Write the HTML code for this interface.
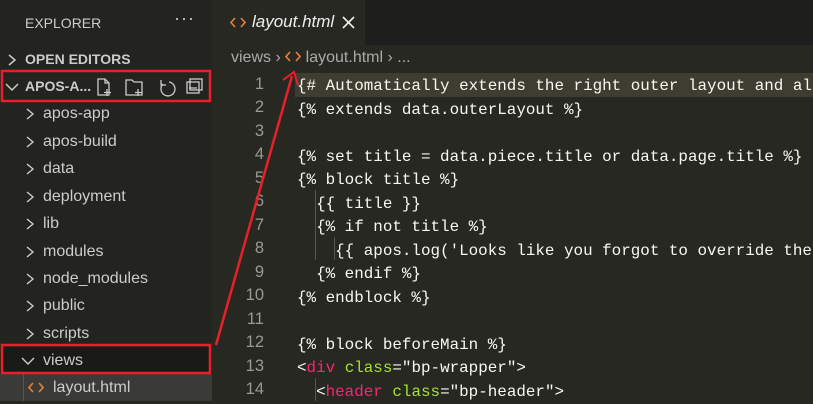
<!DOCTYPE html><html><head><style>
body{margin:0;width:813px;height:401px;overflow:hidden;background:#272822;font-family:"Liberation Sans",sans-serif;position:relative}
.sb{position:absolute;left:0;top:0;width:212px;height:401px;background:#232320;color:#ccc}
.row{position:absolute;left:0;width:212px;height:27px;line-height:27px;font-size:16px;color:#ccc}
.cv{position:absolute;top:8px}
.tb{position:absolute;left:212px;top:0;width:601px;height:45px;background:#1e1e1c}
.tab{position:absolute;left:212px;top:0;width:153px;height:45px;background:#272822}
.code{position:absolute;font-family:"Liberation Mono",monospace;font-size:15.9px;color:#f8f8f2;white-space:pre}
.ln{position:absolute;font-family:"Liberation Sans",sans-serif;font-size:16.5px;color:#9a9a94;text-align:right;width:50px;left:214px}
.o{color:#e8803a}
.p{color:#f92672}.g{color:#a6e22e}
</style></head><body>
<div class="sb">
<div style="position:absolute;left:25px;top:15px;font-size:14px;color:#ccc">EXPLORER</div>
<div style="position:absolute;left:174px;top:8px;font-size:18px;color:#ccc;letter-spacing:1px">···</div>
<div class="row" style="top:46px;font-weight:bold;font-size:14px"><svg class="cv" style="left:7px" width="10" height="12" fill="none" stroke="#ccc" stroke-width="1.5"><path d="M2 1l6 5-6 5"/></svg><span style="position:absolute;left:25px">OPEN EDITORS</span></div>
<div class="row" style="top:73px;font-weight:bold;font-size:14px"><svg class="cv" style="left:5px;top:10px" width="14" height="9" fill="none" stroke="#ccc" stroke-width="1.5"><path d="M1 1l6 6 6-6"/></svg><span style="position:absolute;left:25px">APOS-A...</span>
<svg style="position:absolute;left:95px;top:4px" width="110" height="20" fill="none" stroke="#ccc" stroke-width="1.3"><path d="M3 2h7l4 4v12H3z M10 2v4h4 M12 12v7 M9 15.5h7"/><path d="M31 3h6l2 2h8v13H31z M43 12v7 M40 15.5h7"/><path d="M74 5a7 7 0 1 1-6 2 M66 3v5h5"/><rect x="92" y="5" width="12" height="11"/><rect x="95" y="2" width="12" height="11"/><path d="M94 11h8"/></svg></div>
<div class="row" style="top:100px"><svg class="cv" style="left:25px" width="10" height="12" fill="none" stroke="#ccc" stroke-width="1.4"><path d="M2 1l6 5-6 5"/></svg><span style="position:absolute;left:43px">apos-app</span></div>
<div class="row" style="top:128px"><svg class="cv" style="left:25px" width="10" height="12" fill="none" stroke="#ccc" stroke-width="1.4"><path d="M2 1l6 5-6 5"/></svg><span style="position:absolute;left:43px">apos-build</span></div>
<div class="row" style="top:155px"><svg class="cv" style="left:25px" width="10" height="12" fill="none" stroke="#ccc" stroke-width="1.4"><path d="M2 1l6 5-6 5"/></svg><span style="position:absolute;left:43px">data</span></div>
<div class="row" style="top:183px"><svg class="cv" style="left:25px" width="10" height="12" fill="none" stroke="#ccc" stroke-width="1.4"><path d="M2 1l6 5-6 5"/></svg><span style="position:absolute;left:43px">deployment</span></div>
<div class="row" style="top:210px"><svg class="cv" style="left:25px" width="10" height="12" fill="none" stroke="#ccc" stroke-width="1.4"><path d="M2 1l6 5-6 5"/></svg><span style="position:absolute;left:43px">lib</span></div>
<div class="row" style="top:238px"><svg class="cv" style="left:25px" width="10" height="12" fill="none" stroke="#ccc" stroke-width="1.4"><path d="M2 1l6 5-6 5"/></svg><span style="position:absolute;left:43px">modules</span></div>
<div class="row" style="top:265px"><svg class="cv" style="left:25px" width="10" height="12" fill="none" stroke="#ccc" stroke-width="1.4"><path d="M2 1l6 5-6 5"/></svg><span style="position:absolute;left:43px">node_modules</span></div>
<div class="row" style="top:292px"><svg class="cv" style="left:25px" width="10" height="12" fill="none" stroke="#ccc" stroke-width="1.4"><path d="M2 1l6 5-6 5"/></svg><span style="position:absolute;left:43px">public</span></div>
<div class="row" style="top:320px"><svg class="cv" style="left:25px" width="10" height="12" fill="none" stroke="#ccc" stroke-width="1.4"><path d="M2 1l6 5-6 5"/></svg><span style="position:absolute;left:43px">scripts</span></div>
<div class="row" style="top:347px;background:#1a1a18"><svg class="cv" style="left:21px;top:10px" width="14" height="9" fill="none" stroke="#ccc" stroke-width="1.4"><path d="M1 1l6 6 6-6"/></svg><span style="position:absolute;left:43px">views</span></div>
<div class="row" style="top:374px;background:#3a3a36"><svg style="position:absolute;left:28px;top:8px" width="16" height="11" fill="none" stroke="#e8803a" stroke-width="1.6"><path d="M5 1L1 5.5 5 10 M11 1l4 4.5-4 4.5"/></svg><span style="position:absolute;left:53px">layout.html</span></div>
<div style="position:absolute;left:23px;top:374px;width:1px;height:27px;background:#555"></div>
</div>
<div class="tb"></div><div class="tab">
<svg style="position:absolute;left:18px;top:17px" width="16" height="11" fill="none" stroke="#e8803a" stroke-width="1.6"><path d="M5 1L1 5.5 5 10 M11 1l4 4.5-4 4.5"/></svg>
<span style="position:absolute;left:40px;top:12px;font-size:17px;font-style:italic;color:#eee">layout.html</span>
<svg style="position:absolute;left:130px;top:16px" width="13" height="13" stroke="#eee" stroke-width="1.6"><path d="M1 1l11 11M12 1L1 12"/></svg></div>
<div style="position:absolute;left:231px;top:49px;font-size:16px;color:#aaa">views <span style="color:#aaa">›</span> <svg width="16" height="11" fill="none" stroke="#e8803a" stroke-width="1.6"><path d="M5 1L1 5.5 5 10 M11 1l4 4.5-4 4.5"/></svg> layout.html › ...</div>
<div style="position:absolute;left:295px;top:73px;width:518px;height:24px;background:#3e3d32"></div>
<div style="position:absolute;left:315px;top:190px;width:1px;height:70px;background:#555"></div>
<div style="position:absolute;left:334px;top:237px;width:1px;height:23px;background:#555"></div>
<div style="position:absolute;left:315px;top:378px;width:1px;height:23px;background:#555"></div>
<div class="ln" style="top:75px">1</div><div class="ln" style="top:98px">2</div><div class="ln" style="top:122px">3</div><div class="ln" style="top:145px">4</div><div class="ln" style="top:169px">5</div><div class="ln" style="top:192px">6</div><div class="ln" style="top:216px">7</div><div class="ln" style="top:239px">8</div><div class="ln" style="top:263px">9</div><div class="ln" style="top:286px">10</div><div class="ln" style="top:310px">11</div><div class="ln" style="top:333px">12</div><div class="ln" style="top:357px">13</div><div class="ln" style="top:380px">14</div>
<div class="code" style="left:297px;top:75px;line-height:23.5px">{# Automatically extends the right outer layout and also
{% extends data.outerLayout %}

{% set title = data.piece.title or data.page.title %}
{% block title %}
  {{ title }}
  {% if not title %}
    {{ apos.log('Looks like you forgot to override the
  {% endif %}
{% endblock %}

{% block beforeMain %}
&lt;<span class="p">div</span> <span class="g">class</span>="bp-wrapper"&gt;
  &lt;<span class="p">header</span> <span class="g">class</span>="bp-header"&gt;</div>
<svg style="position:absolute;left:0;top:0" width="813" height="401" fill="none" stroke="#e8202a" stroke-width="2.5">
<rect x="2" y="71" width="208" height="30"/><rect x="2" y="345" width="208" height="28"/>
<path d="M216 345L292 76"/><path d="M283 80L294 72L298 85" stroke-width="2"/></svg>
</body></html>
